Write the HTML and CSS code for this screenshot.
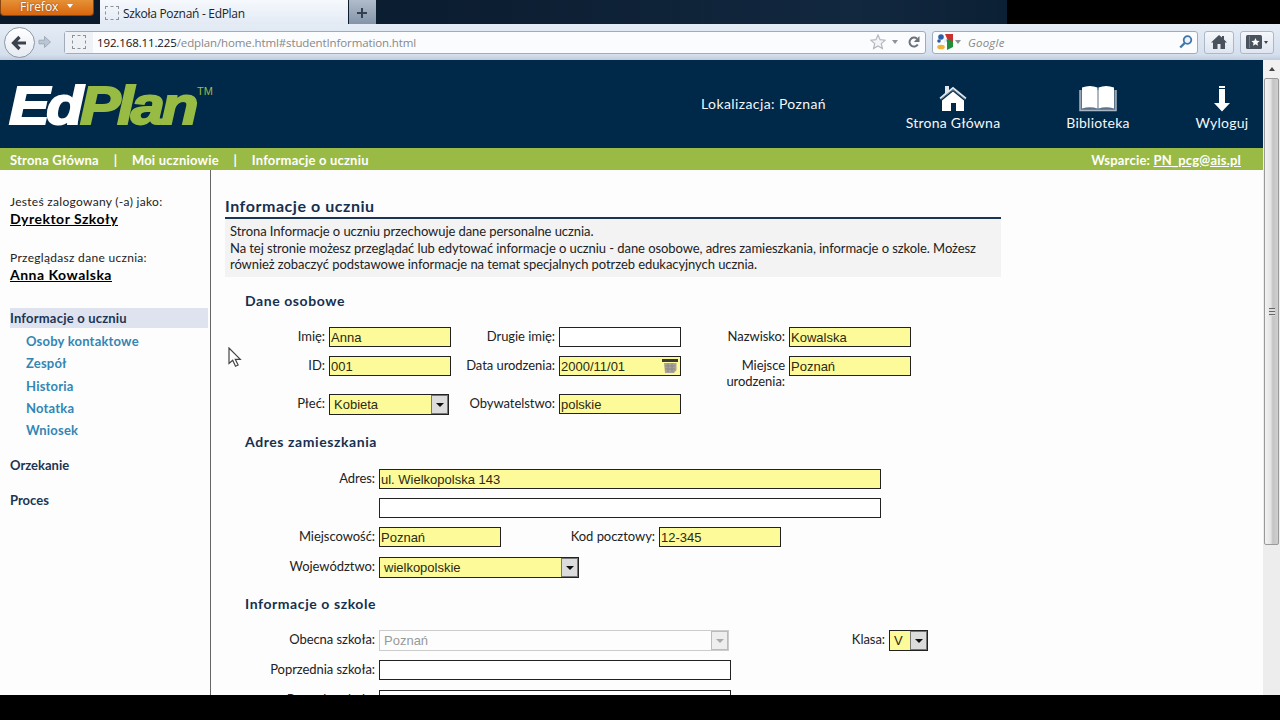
FILE: index.html
```html
<!DOCTYPE html>
<html lang="pl">
<head>
    <meta charset="UTF-8">
    <meta name="viewport" content="width=device-width, initial-scale=1.0">
    <title>Szkoła Poznań - EdPlan</title>
    <link rel="stylesheet" href="styles.css">
</head>
<body>
    <!-- Tab strip -->
    <div class="tabstrip">
        <div class="firefox-button">Firefox <span class="caret"></span></div>
        <div class="tab"><span class="favicon"></span>Szkoła Poznań - EdPlan</div>
        <div class="new-tab">
            <svg width="12" height="12" viewBox="0 0 12 12"><path d="M6 1v10M1 6h10" stroke="#33404f" stroke-width="2"/></svg>
        </div>
    </div>

    <!-- Browser toolbar -->
    <div class="toolbar">
        <div class="back">
            <svg width="16" height="16" viewBox="0 0 16 16"><path d="M8.500 2L2.500 8l6 6M3 8h12" fill="none" stroke="#3b424c" stroke-width="3.200"/></svg>
        </div>
        <div class="forward">
            <svg width="14" height="14" viewBox="0 0 14 14"><path d="M1 5.200h5.500V1.500L12.500 7l-6 5.500V8.800H1z" fill="#bcc6d3" stroke="#9fabba"/></svg>
        </div>
        <div class="urlbar">
            <span class="identity"><span class="favicon"></span></span>
            <span class="url"><b>192.168.11.225</b>/edplan/home.html#studentInformation.html</span>
            <svg class="star" width="16" height="16" viewBox="0 0 16 16"><path d="M8 1l2.100 4.700 5 .5-3.800 3.400 1.100 5L8 12l-4.400 2.600 1.100-5L.9 6.200l5-.5z" fill="#f2f4f7" stroke="#b4b8be" stroke-width="1.200"/></svg>
            <span class="caret gray"></span>
            <svg class="reload" width="14" height="14" viewBox="0 0 14 14"><path d="M10.800 9.500A4.500 4.500 0 1 1 10 3.700" fill="none" stroke="#6b727b" stroke-width="2"/><path d="M12.500 1v6H6.800z" fill="#6b727b"/></svg>
        </div>
        <div class="searchbar">
            <svg width="18" height="18" viewBox="0 0 18 18">
                <path d="M9 1h8v7h-5z" fill="#c9302f"/>
                <path d="M9 6l8 2v6l-6 3V9z" fill="#1f8f3c"/>
                <circle cx="5" cy="4" r="2.800" fill="#2b5fa8"/>
                <circle cx="3" cy="8" r="1.800" fill="#2b5fa8"/>
                <path d="M8 4l3 3-3 4z" fill="#e8f0fa"/>
                <ellipse cx="5" cy="14" rx="3.800" ry="2.300" fill="#edb23c"/>
            </svg>
            <span class="caret gray"></span>
            <span class="placeholder">Google</span>
            <svg width="14" height="14" viewBox="0 0 14 14"><circle cx="8.500" cy="5" r="3.800" fill="#eaf3fd" stroke="#4275a8" stroke-width="1.800"/><path d="M5.700 8L1.200 12.500" stroke="#4275a8" stroke-width="2.400"/></svg>
        </div>
        <div class="tool-button home-button">
            <svg width="16" height="14" viewBox="0 0 16 14"><path d="M8 0l3 2.600V1h2v3.500L16 7.500h-2V14H9.500V9h-3v5H2V7.500H0z" fill="#49515c"/></svg>
        </div>
        <div class="tool-button bookmarks-button">
            <svg width="16" height="14" viewBox="0 0 16 14"><rect width="16" height="14" rx="1.500" fill="#4a525d"/><path d="M3.500 1v12" stroke="#737b86"/><path d="M9.500 3l1.200 2.700 2.900.3-2.200 1.900.7 2.900-2.600-1.600-2.600 1.600.7-2.900L5.400 6l2.900-.3z" fill="#fff"/></svg>
            <span class="caret dark"></span>
        </div>
    </div>

    <div class="viewport">
        <div class="page">
            <!-- Header -->
            <div class="header">
                <div class="logo">
                    <div class="logo-name"><span class="logo-ed">Ed</span><span class="logo-plan">Plan</span></div>
                    <div class="logo-tm">TM</div>
                </div>
                <div class="location">Lokalizacja: Poznań</div>
                <div class="header-link link-home">
                    <svg width="30" height="27" viewBox="0 0 30 27"><path d="M7 1h4v4l4-3.300 13.500 11-1.500 1.800L15 5 3 14.500l-1.500-1.800L7 8z" fill="#dfe6ed"/><path d="M15 6.500l11 9V26h-8v-8h-5v8H4V15.500z" fill="#fff"/><path d="M2.500 14.500L15 4.500l12.500 10" fill="none" stroke="#3a5570" stroke-width=".8"/></svg>
                    <span>Strona Główna</span>
                </div>
                <div class="header-link link-library">
                    <svg width="38" height="27" viewBox="0 0 38 27"><path d="M1 5v20.500h36V5" fill="#5c7088" stroke="#a9b6c4" stroke-width="1.500"/><path d="M3 2.500Q11-.5 18.500 2.500v21Q11 21 3 23.500zM19.500 2.500Q27-.5 35 2.500v21Q27 21 19.500 23.500z" fill="#fff"/></svg>
                    <span>Biblioteka</span>
                </div>
                <div class="header-link link-logout">
                    <svg width="18" height="27" viewBox="0 0 18 27"><path d="M6 1h6v2H6zM6 4h6v14h5l-8 8.500L1 18h5z" fill="#fff"/></svg>
                    <span>Wyloguj</span>
                </div>
            </div>

            <!-- Breadcrumbs -->
            <div class="breadcrumbs">
                <span>Strona Główna</span><i>|</i><span>Moi uczniowie</span><i>|</i><span>Informacje o uczniu</span>
                <span class="support">Wsparcie: <u>PN_pcg@ais.pl</u></span>
            </div>

            <div class="columns">
                <!-- Sidebar -->
                <div class="sidebar">
                    <div class="who">Jesteś zalogowany (-a) jako:</div>
                    <div class="who-name">Dyrektor Szkoły</div>
                    <div class="who">Przeglądasz dane ucznia:</div>
                    <div class="who-name">Anna Kowalska</div>
                    <ul class="menu">
                        <li class="active">Informacje o uczniu</li>
                        <li class="sub">Osoby kontaktowe</li>
                        <li class="sub">Zespół</li>
                        <li class="sub">Historia</li>
                        <li class="sub">Notatka</li>
                        <li class="sub">Wniosek</li>
                        <li class="top">Orzekanie</li>
                        <li class="top">Proces</li>
                    </ul>
                </div>

                <!-- Student form -->
                <div class="content">
                    <h1>Informacje o uczniu</h1>
                    <div class="intro">
                        <div>Strona Informacje o uczniu przechowuje dane personalne ucznia.</div>
                        <div>Na tej stronie możesz przeglądać lub edytować informacje o uczniu - dane osobowe, adres zamieszkania, informacje o szkole. Możesz</div>
                        <div>również zobaczyć podstawowe informacje na temat specjalnych potrzeb edukacyjnych ucznia.</div>
                    </div>

                    <h2>Dane osobowe</h2>
                    <div class="personal">
                        <label>Imię:</label><div class="field">Anna</div>
                        <label>Drugie imię:</label><div class="field empty"></div>
                        <label>Nazwisko:</label><div class="field">Kowalska</div>
                        <label>ID:</label><div class="field">001</div>
                        <label>Data urodzenia:</label>
                        <div class="field date">2000/11/01
                            <svg width="16" height="14" viewBox="0 0 16 14"><path d="M0 0h16v3H0z" fill="#3c3a38"/><path d="M2 4h12.500v7L12 14H3z" fill="#a8a39e"/><path d="M3 7h10M3 10h10M6 4v9M10 4v9" stroke="#8d8884"/></svg>
                        </div>
                        <label>Miejsce<br>urodzenia:</label><div class="field">Poznań</div>
                        <label>Płeć:</label><div class="field select gender">Kobieta<span class="arrow"></span></div>
                        <label>Obywatelstwo:</label><div class="field">polskie</div>
                    </div>

                    <h2 class="address-title">Adres zamieszkania</h2>
                    <div class="row"><label>Adres:</label><div class="field street">ul. Wielkopolska 143</div></div>
                    <div class="row"><label></label><div class="field street empty"></div></div>
                    <div class="row"><label>Miejscowość:</label><div class="field">Poznań</div><label>Kod pocztowy:</label><div class="field">12-345</div></div>
                    <div class="row"><label>Województwo:</label><div class="field select region">wielkopolskie<span class="arrow"></span></div></div>

                    <h2 class="school-title">Informacje o szkole</h2>
                    <div class="row school-row"><label>Obecna szkoła:</label><div class="field select school disabled">Poznań<span class="arrow"></span></div><label class="grade-label">Klasa:</label><div class="field select grade">V<span class="arrow"></span></div></div>
                    <div class="row school-row"><label>Poprzednia szkoła:</label><div class="field previous empty"></div></div>
                    <div class="row school-row"><label>Przyszła szkoła:</label><div class="field previous empty"></div></div>
                </div>
            </div>
        </div>

        <!-- Scrollbar -->
        <div class="scrollbar">
            <div class="scroll-up"><span></span></div>
            <div class="thumb"><span class="grip"></span></div>
        </div>
    </div>

    <svg class="cursor" width="16" height="22" viewBox="0 0 16 22"><path d="M1 1v15.500l3.700-3.300 2.800 6 2.600-1.200-2.800-5.700h5z" fill="#fff" stroke="#444" stroke-width="1.200"/></svg>
</body>
</html>
```
FILE: styles.css
```css
* {
    box-sizing: border-box;
}

body {
    margin: 0;
    width: 1280px;
    height: 720px;
    overflow: hidden;
    background: #000;
    font-family: Lato, "Noto Sans", sans-serif;
    font-size: 13px;
    color: #222;
    white-space: nowrap;
}

svg {
    display: block;
    flex: none;
}

/* Browser tabs */
.tabstrip {
    display: flex;
    width: 1007px;
    height: 24px;
    background: linear-gradient(90deg, #0a1a2a, #0c1e32 50%, #12283f 85%, #0b2034);
    font: 12px "Open Sans", sans-serif;
}

.firefox-button {
    width: 94px;
    height: 16px;
    padding-left: 19px;
    border: 1px solid #8a4510;
    border-top: 0;
    border-radius: 0 0 4px 4px;
    background: linear-gradient(#e59136, #d9660f);
    color: #fff;
    line-height: 13px;
    text-shadow: 0 0 2px #7a3400;
}

.caret {
    display: inline-block;
    border: 3px solid transparent;
    border-top: 4px solid #fff;
    border-bottom: 0;
    margin: 0 0 3px 5px;
}

.caret.gray {
    border-top-color: #8b929b;
    margin: 0;
}

.caret.dark {
    border-top-color: #3d444e;
    border-width: 3px 2px 0;
    margin: 0 0 0 2px;
}

.tab {
    display: flex;
    align-items: center;
    width: 248px;
    height: 24px;
    margin-left: 6px;
    padding: 2px 0 0 5px;
    background: linear-gradient(#f6f9fd, #e3eaf5);
    color: #222;
    letter-spacing: -0.3px;
}

.favicon {
    flex: none;
    width: 14px;
    height: 14px;
    margin-right: 4px;
    border: 1px dashed #8d9299;
}

.new-tab {
    width: 27px;
    height: 24px;
    margin-left: 1px;
    padding: 7px 0 0 7px;
    background: linear-gradient(#b0bccb, #8494a8);
}

/* Browser toolbar */
.toolbar {
    display: flex;
    align-items: center;
    height: 36px;
    background: linear-gradient(#e5ecf6, #d5dfed 85%, #bfcbdc);
    font: 11.5px "Open Sans", sans-serif;
}

.back {
    width: 31px;
    height: 31px;
    margin-left: 4px;
    padding: 7px 6px;
    border: 1px solid #8e97a4;
    border-radius: 50%;
    background: linear-gradient(#fff, #e6ebf3);
}

.forward {
    width: 29px;
    padding-left: 3px;
}

.urlbar,
.searchbar {
    display: flex;
    align-items: center;
    height: 23px;
    border: 1px solid #a1acba;
    border-radius: 3px;
    background: #fbfcfe;
}

.urlbar {
    width: 862px;
}

.identity {
    display: flex;
    width: 28px;
    height: 21px;
    padding: 3px 0 0 7px;
    margin-right: 4px;
    background: #eef1f5;
}

.url {
    flex: 1;
    color: #888;
    letter-spacing: -0.12px;
}

.url b {
    font-weight: normal;
    color: #111;
}

.star {
    margin-right: 6px;
}

.reload {
    margin: 0 4px 0 9px;
}

.searchbar {
    width: 266px;
    margin-left: 6px;
    padding: 0 4px 0 3px;
}

.searchbar svg:first-child {
    margin-right: 1px;
}

.placeholder {
    flex: 1;
    margin-left: 7px;
    font-style: italic;
    color: #888;
    letter-spacing: 0.2px;
}

.tool-button {
    display: flex;
    align-items: center;
    justify-content: center;
    height: 23px;
    border: 1px solid #adb8c7;
    border-radius: 3px;
    background: linear-gradient(#f4f7fb, #dfe6f0);
}

.home-button {
    width: 30px;
    margin-left: 6px;
}

.bookmarks-button {
    width: 34px;
    margin-left: 6px;
}

/* Page area */
.viewport {
    display: flex;
    height: 635px;
    overflow: hidden;
    background: #fdfdfd;
}

.page {
    width: 1263px;
}

.header {
    display: flex;
    height: 88px;
    padding-left: 9px;
    background: #002848;
    color: #f4f7fa;
    font-size: 14px;
    letter-spacing: 0.25px;
}

.logo {
    display: flex;
    width: 692px;
    padding-top: 17px;
}

.logo-name {
    width: 188px;
    font: italic bold 53px/58px "Liberation Sans", sans-serif;
    letter-spacing: -3px;
    transform: scaleX(1.15);
    transform-origin: left;
}

.logo-ed {
    color: #fff;
    -webkit-text-stroke: 2px #fff;
}

.logo-plan {
    color: #98bb44;
    -webkit-text-stroke: 2px #98bb44;
}

.logo-tm {
    margin-top: 6px;
    color: #98bb44;
    font: 11px/16px "Liberation Sans", sans-serif;
    letter-spacing: 0;
}

.location {
    width: 205px;
    padding-top: 35px;
    letter-spacing: 0.4px;
}

.header-link {
    display: flex;
    flex-direction: column;
    align-items: center;
    padding-top: 25px;
    gap: 2px;
}

.link-home {
    width: 94px;
}

.link-library {
    width: 66px;
    margin-left: 65px;
}

.link-logout {
    width: 54px;
    margin-left: 64px;
}

/* Green bar */
.breadcrumbs {
    display: flex;
    align-items: center;
    height: 22px;
    padding: 1px 22px 0 10px;
    background: #9aba46;
    color: #fff;
    font-weight: bold;
    letter-spacing: 0.2px;
}

.breadcrumbs i {
    width: 33px;
    text-align: center;
    font-style: normal;
}

.support {
    margin-left: auto;
}

.columns {
    display: flex;
    height: 525px;
}

/* Sidebar */
.sidebar {
    width: 211px;
    padding: 24px 2px 0 10px;
    border-right: 1px solid #666;
}

.who {
    font-size: 12px;
    line-height: 16px;
    letter-spacing: 0.3px;
}

.who-name {
    margin-bottom: 23px;
    color: #000;
    font-size: 14px;
    font-weight: bold;
    line-height: 17px;
    letter-spacing: 0.5px;
    text-decoration: underline;
}

.menu {
    margin: 0;
    padding: 2px 0 0;
    list-style: none;
    font-weight: bold;
    color: #1b3554;
    letter-spacing: 0.2px;
}

.menu li {
    height: 22.3px;
    line-height: 23px;
}

.menu .active {
    height: 20px;
    margin: 0 0 2px;
    line-height: 20px;
    background: #dfe3ef;
}

.menu .sub {
    padding-left: 16px;
    color: #3286b4;
}

.menu .top {
    height: 35px;
    padding-top: 13px;
    letter-spacing: 0;
}

/* Content */
.content {
    width: 776px;
    margin-left: 14px;
}

h1 {
    height: 49px;
    margin: 0;
    padding-top: 26px;
    border-bottom: 2px solid #1b3554;
    color: #15304f;
    font-size: 16px;
    line-height: 20px;
    letter-spacing: 0.55px;
}

.intro {
    height: 58px;
    padding: 4px 5px 0;
    background: #f3f3f3;
    line-height: 16.5px;
    letter-spacing: -0.07px;
}

h2 {
    height: 50px;
    margin: 0;
    padding: 14px 0 0 20px;
    color: #15304f;
    font-size: 14px;
    line-height: 20px;
    letter-spacing: 0.58px;
}

.personal {
    display: grid;
    grid-template-columns: 100px 122px 100px 122px 100px 122px;
    grid-template-rows: 20px 29px 20px;
    gap: 9px 4px;
    height: 90px;
}

label {
    line-height: 16px;
    padding-top: 1px;
    text-align: right;
    letter-spacing: -0.05px;
}

.field {
    position: relative;
    width: 122px;
    height: 20px;
    padding: 1px 0 0 1px;
    border: 1px solid #222;
    background: #fdfa9a;
    color: #2c2a12;
    font: 13px/18px "Liberation Sans", sans-serif;
}

.empty {
    background: #fff;
}

.date svg {
    position: absolute;
    right: 2px;
    top: 2px;
}

.select {
    height: 21px;
    padding-left: 4px;
}

/* Drop-down button of a select */
.arrow {
    position: absolute;
    top: 0;
    right: 0;
    width: 17px;
    height: 19px;
    border: 1px solid #777;
    background: #dcdcdc;
}

.arrow::after {
    content: "";
    position: absolute;
    left: 4px;
    top: 7px;
    border: 4px solid transparent;
    border-top-color: #111;
    border-bottom: 0;
}

.gender {
    width: 120px;
}

.row {
    display: flex;
    gap: 4px;
    height: 29.2px;
}

.row label {
    width: 150px;
}

.street {
    width: 502px;
}

.region {
    width: 200px;
}

.address-title {
    height: 52px;
    padding-top: 15px;
}

.school-title {
    height: 44px;
    padding-top: 8px;
}

.school-row {
    height: 30px;
}

.school {
    width: 350px;
}

.row .grade-label {
    width: 152px;
}

.grade {
    width: 39px;
}

.disabled {
    border-color: #ccc;
    background: #fdfdfd;
    color: #999;
}

.disabled .arrow {
    border-color: #bbb;
    background: #eee;
}

.disabled .arrow::after {
    border-top-color: #aaa;
}

.previous {
    width: 352px;
}

/* Scrollbar */
.scrollbar {
    width: 17px;
    background: #ededed;
}

.scroll-up {
    height: 18px;
    padding: 7px 0 0 6px;
    background: #f1f1f1;
}

.scroll-up span {
    display: block;
    width: 0;
    border: 3px solid transparent;
    border-bottom: 4px solid #444;
    border-top: 0;
}

.thumb {
    display: flex;
    align-items: center;
    justify-content: center;
    width: 15px;
    height: 467px;
    margin-left: 1px;
    border: 1px solid #999;
    border-radius: 2px;
    background: linear-gradient(90deg, #f2f2f2, #e3e3e3 45%, #c4c4c4 60%, #cfcfcf);
}

.grip {
    width: 6px;
    height: 8px;
    background: repeating-linear-gradient(#666 0 1px, #ddd 1px 3px);
}

.cursor {
    position: absolute;
    left: 228px;
    top: 347px;
}
```
